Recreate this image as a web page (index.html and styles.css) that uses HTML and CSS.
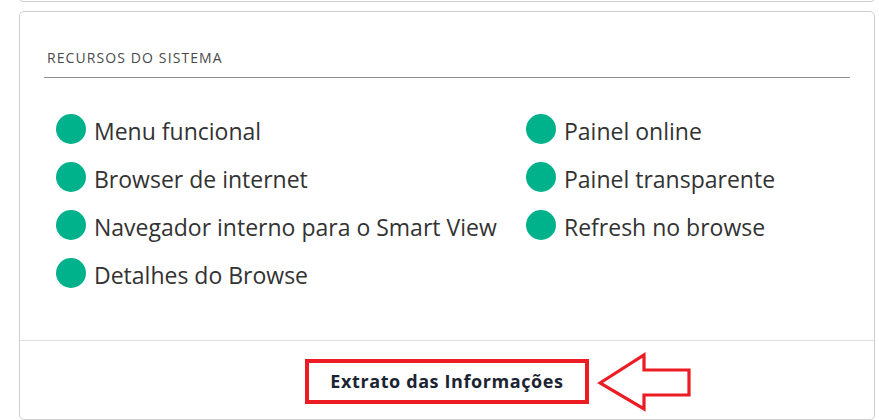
FILE: index.html
```html
<!DOCTYPE html>
<html lang="pt">
<head>
<meta charset="utf-8">
<title>Recursos do sistema</title>
<link rel="stylesheet" href="styles.css">
</head>
<body>
<div class="page">
  <div class="prev-card"></div>
  <section class="card">
    <div class="card-body">
      <h2 class="section-title">RECURSOS DO SISTEMA</h2>
      <div class="features">
        <ul class="feature-col feature-col-left">
          <li class="feature"><span class="dot"></span><span class="label">Menu funcional</span></li>
          <li class="feature"><span class="dot"></span><span class="label">Browser de internet</span></li>
          <li class="feature"><span class="dot"></span><span class="label">Navegador interno para o Smart View</span></li>
          <li class="feature"><span class="dot"></span><span class="label">Detalhes do Browse</span></li>
        </ul>
        <ul class="feature-col">
          <li class="feature"><span class="dot"></span><span class="label">Painel online</span></li>
          <li class="feature"><span class="dot"></span><span class="label">Painel transparente</span></li>
          <li class="feature"><span class="dot"></span><span class="label">Refresh no browse</span></li>
        </ul>
      </div>
    </div>
    <div class="card-footer">
      <div class="action">
        <span class="action-btn">Extrato das Informações</span>
        <svg class="arrow" width="96" height="60" viewBox="0 0 96 60" aria-hidden="true">
          <path d="M3 31 L47 3 L47 18 L92 18 L92 43 L47 43 L47 57 Z" fill="none" stroke="#ec1c24" stroke-width="3.2" stroke-linejoin="miter"/>
        </svg>
      </div>
    </div>
  </section>
</div>
</body>
</html>
```

FILE: styles.css
```css
html, body {
  margin: 0;
  padding: 0;
  background: #ffffff;
}

body {
  font-family: "Open Sans", Lato, sans-serif;
  color: #333333;
}

.page {
  padding: 0 4px 0 19px;
  overflow: hidden;
  height: 420px;
  box-sizing: border-box;
}

.prev-card {
  height: 20px;
  margin-top: -20px;
  border: 1px solid #cfcfcf;
  border-radius: 4px;
}

.card {
  margin-top: 9px;
  height: 409px;
  box-sizing: border-box;
  border: 1px solid #cfcfcf;
  border-radius: 5px;
  display: flex;
  flex-direction: column;
}

.card-body {
  flex: 1;
  padding: 38px 24px 0 24px;
}

.section-title {
  margin: 0;
  padding: 0 0 11px 3px;
  border-bottom: 1px solid #8f8f8f;
  font-size: 14px;
  font-weight: 400;
  line-height: 16px;
  color: #4a4a4a;
  letter-spacing: 1.1px;
}

.features {
  display: flex;
  padding: 36px 0 0 12px;
}

.feature-col {
  list-style: none;
  margin: 0;
  padding: 0;
  display: flex;
  flex-direction: column;
  gap: 18px;
}

.feature-col-left {
  width: 470px;
}

.feature {
  display: flex;
  align-items: flex-start;
  gap: 8px;
  height: 30px;
}

.dot {
  width: 30px;
  height: 30px;
  border-radius: 50%;
  background: #00b28b;
  flex: none;
}

.label {
  font-size: 23px;
  line-height: 30px;
  padding-top: 2px;
  color: #333333;
  white-space: nowrap;
}

.card-footer {
  height: 78px;
  border-top: 1px solid #e2e2e2;
  display: flex;
  align-items: center;
  justify-content: center;
}

.action {
  position: relative;
  margin-top: 2px;
}

.action-btn {
  display: block;
  border: 4px solid #ec1c24;
  padding: 0 21px;
  height: 37px;
  line-height: 37px;
  font-size: 18px;
  font-weight: 700;
  letter-spacing: 0.6px;
  color: #1b2433;
  white-space: nowrap;
}

.arrow {
  position: absolute;
  left: calc(100% + 8px);
  top: -7px;
}
```
